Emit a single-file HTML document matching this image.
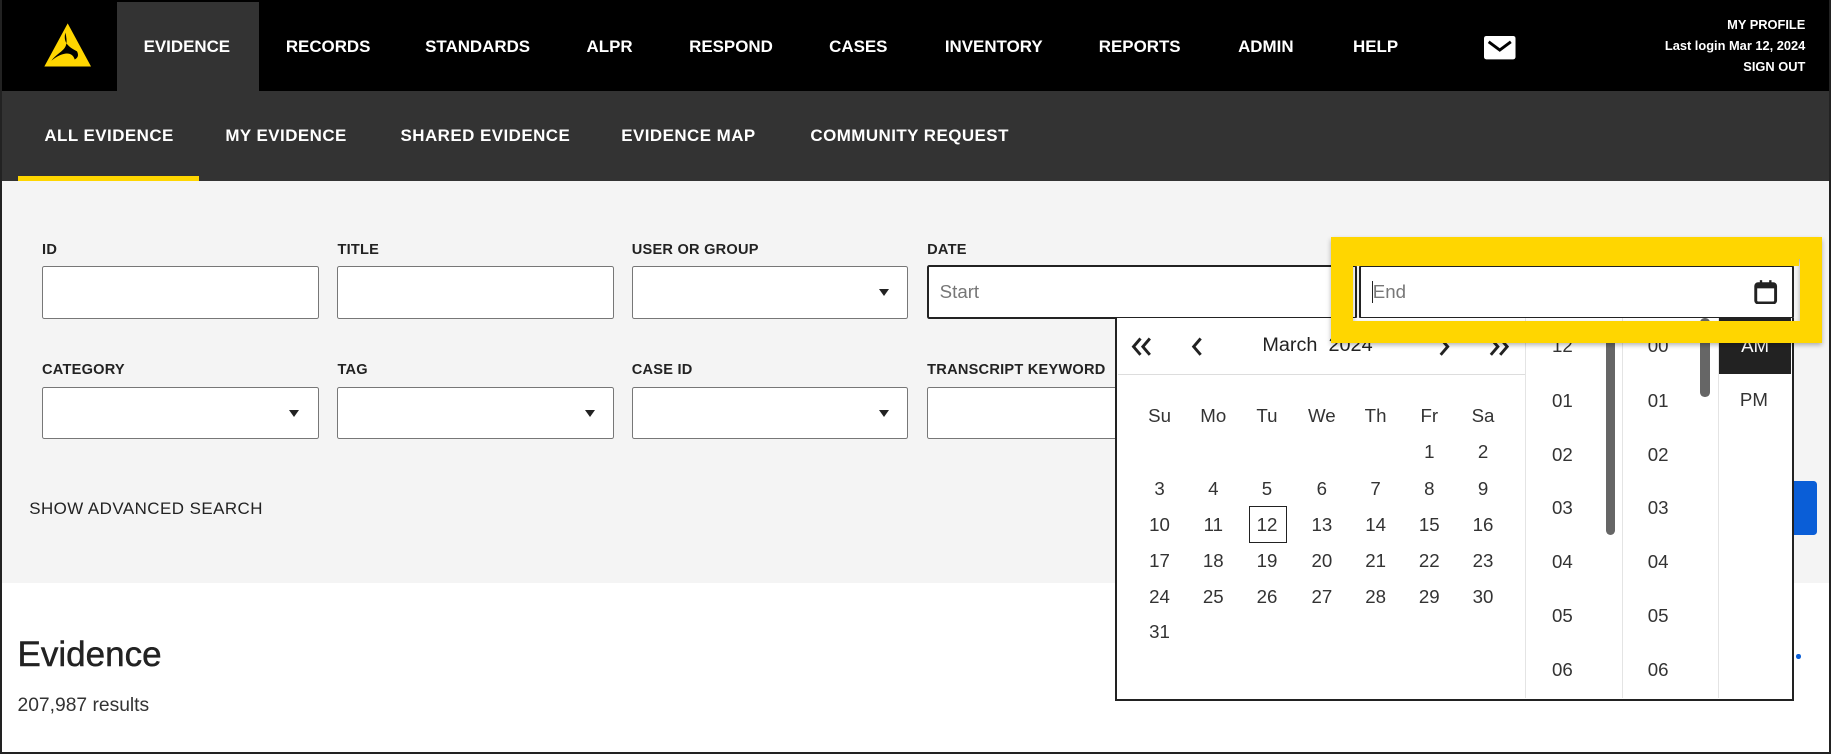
<!DOCTYPE html>
<html><head><meta charset="utf-8"><style>
*{margin:0;padding:0;box-sizing:border-box}
html,body{width:1831px;height:754px;overflow:hidden;background:#fff}
#w{zoom:1.16773;width:1568px;height:646px;position:relative;font-family:"Liberation Sans",sans-serif;color:#222;overflow:hidden}
.a{position:absolute}
.top{left:0;top:0;width:1568px;height:78px;background:#000}
.nav{color:#fff;font-weight:bold;font-size:14.5px;top:32px;letter-spacing:0;transform:translateX(-50%)}
.sub{left:0;top:78px;width:1568px;height:77px;background:#333}
.sn{color:#fff;font-weight:bold;font-size:14.5px;top:108px;letter-spacing:.4px}
.gray{left:0;top:155px;width:1568px;height:344px;background:#f4f4f4}
.lbl{font-size:12.5px;font-weight:bold;color:#222;letter-spacing:.2px}
.in{background:#fff;border:1px solid #777;border-radius:2px;height:45px;width:237px}
.car{position:absolute;right:16px;top:19px;width:0;height:0;border-left:5px solid transparent;border-right:5px solid transparent;border-top:6px solid #222}
.cal{font-size:16px;color:#333;transform:translateX(-50%)}
.tm{font-size:16px;color:#333;transform:translateX(-50%)}
</style></head><body><div id="w">
<div class="a top"></div>
<div class="a" style="left:100px;top:2px;width:122px;height:76px;background:#333"></div>
<svg class="a" style="left:36px;top:18px" width="44" height="42" viewBox="0 0 44 42"><polygon points="22,2 42,39 2,39" fill="#ffd600"/><path d="M20 10 C18 18 22 22 30 26 C32 30 30 32 28 33 C26 26 18 26 8 34 C16 24 24 26 20 10Z" fill="#000"/></svg>
<div class="a nav" style="left:160px">EVIDENCE</div>
<div class="a nav" style="left:281px">RECORDS</div>
<div class="a nav" style="left:409px">STANDARDS</div>
<div class="a nav" style="left:522px">ALPR</div>
<div class="a nav" style="left:626px">RESPOND</div>
<div class="a nav" style="left:735px">CASES</div>
<div class="a nav" style="left:851px">INVENTORY</div>
<div class="a nav" style="left:976px">REPORTS</div>
<div class="a nav" style="left:1084px">ADMIN</div>
<div class="a nav" style="left:1178px">HELP</div>
<svg class="a" style="left:1271px;top:31px" width="27" height="20" viewBox="0 0 27 20"><rect width="27" height="20" rx="2" fill="#fff"/><path d="M4 5 L13.5 12 L23 5" stroke="#000" stroke-width="2.5" fill="none"/></svg>
<div class="a" style="right:22px;top:12px;text-align:right;color:#fff;font-weight:bold;font-size:11px;line-height:18px">MY PROFILE<br>Last login Mar 12, 2024<br>SIGN OUT</div>
<div class="a sub"></div>
<div class="a sn" style="left:38px">ALL EVIDENCE</div>
<div class="a sn" style="left:193px">MY EVIDENCE</div>
<div class="a sn" style="left:343px">SHARED EVIDENCE</div>
<div class="a sn" style="left:532px">EVIDENCE MAP</div>
<div class="a sn" style="left:694px">COMMUNITY REQUEST</div>
<div class="a" style="left:15px;top:151px;width:155px;height:4px;background:#ffd600"></div>
<div class="a gray"></div>
<div class="a lbl" style="left:36px;top:207px">ID</div>
<div class="a lbl" style="left:289px;top:207px">TITLE</div>
<div class="a lbl" style="left:541px;top:207px">USER OR GROUP</div>
<div class="a lbl" style="left:794px;top:207px">DATE</div>
<div class="a in" style="left:36px;top:228px"></div>
<div class="a in" style="left:289px;top:228px"></div>
<div class="a in" style="left:541px;top:228px"><div class="car"></div></div>
<div class="a" style="left:794px;top:227px;width:368px;height:46px;background:#fff;border:2px solid #222;border-radius:2px"><span style="position:absolute;left:9px;top:12px;font-size:16px;color:#777">Start</span><div style="position:absolute;right:4px;top:11px;width:12px;height:20px;border:2.5px solid #222;border-radius:2px"></div></div>
<div class="a" style="left:1164px;top:227px;width:372px;height:46px;background:#fff;border:2px solid #222;border-radius:2px"><span style="position:absolute;left:9px;top:12px;font-size:16px;color:#777;border-left:1.5px solid #222">End</span><svg style="position:absolute;right:12px;top:10px" width="20" height="22" viewBox="0 0 20 22"><rect x="1.5" y="4" width="17" height="16.5" rx="2" fill="none" stroke="#222" stroke-width="2.5"/><rect x="1.5" y="4" width="17" height="4" fill="#222"/><rect x="5" y="1" width="2" height="5" fill="#222"/><rect x="13" y="1" width="2" height="5" fill="#222"/></svg></div>
<div class="a lbl" style="left:36px;top:310px">CATEGORY</div>
<div class="a lbl" style="left:289px;top:310px">TAG</div>
<div class="a lbl" style="left:541px;top:310px">CASE ID</div>
<div class="a lbl" style="left:794px;top:310px">TRANSCRIPT KEYWORD</div>
<div class="a in" style="left:36px;top:331px"><div class="car"></div></div>
<div class="a in" style="left:289px;top:331px"><div class="car"></div></div>
<div class="a in" style="left:541px;top:331px"><div class="car"></div></div>
<div class="a in" style="left:794px;top:331px;width:200px"></div>
<div class="a" style="left:25px;top:427px;font-size:14.5px;letter-spacing:.4px;color:#222">SHOW ADVANCED SEARCH</div>
<div class="a" style="left:1500px;top:412px;width:56px;height:46px;background:#0a5ed7;border-radius:3px"></div>
<div class="a" style="left:15px;top:544px;font-size:30px;color:#222;-webkit-text-stroke:.4px #222">Evidence</div>
<div class="a" style="left:15px;top:595px;font-size:16.5px;color:#333">207,987 results</div>
<div class="a" style="left:1538px;top:560px;width:4px;height:4px;border-radius:2px;background:#0a5ed7"></div>
<!-- popup -->
<div class="a" style="left:955px;top:272px;width:581px;height:328px;background:#fff;border:2px solid #222;border-top:none"></div>
<div class="a" style="left:957px;top:320px;width:349px;height:1px;background:#ddd"></div>
<div class="a" style="left:1306px;top:272px;width:1px;height:326px;background:#e4e4e4"></div>
<div class="a" style="left:1389px;top:272px;width:1px;height:326px;background:#e4e4e4"></div>
<div class="a" style="left:1471px;top:272px;width:1px;height:326px;background:#e4e4e4"></div>
<div class="a" style="left:1472px;top:272px;width:62px;height:48px;background:#222"></div>
<div class="a" style="left:1503px;top:287px;color:#fff;font-size:16px;transform:translateX(-50%)">AM</div>
<div class="a tm" style="left:1502px;top:333px">PM</div>
<div class="a" style="left:1375px;top:280px;width:8px;height:178px;border-radius:4px;background:#666"></div>
<div class="a" style="left:1456px;top:272px;width:8px;height:68px;border-radius:4px;background:#666"></div>
<div class="a tm" style="left:1338px;top:287px">12</div>
<div class="a tm" style="left:1420px;top:287px">00</div>
<svg class="a" style="left:968px;top:287px" width="22" height="20" viewBox="0 0 22 20"><path d="M9 3 L3 10 L9 17 M17 3 L11 10 L17 17" stroke="#222" stroke-width="2.5" fill="none"/></svg>
<svg class="a" style="left:1018px;top:287px" width="14" height="20" viewBox="0 0 14 20"><path d="M10 3 L4 10 L10 17" stroke="#222" stroke-width="2.5" fill="none"/></svg>
<div class="a" style="left:1081px;top:286px;font-size:17px;color:#222">March&nbsp; 2024</div>
<svg class="a" style="left:1230px;top:287px" width="14" height="20" viewBox="0 0 14 20"><path d="M4 3 L10 10 L4 17" stroke="#222" stroke-width="2.5" fill="none"/></svg>
<svg class="a" style="left:1272px;top:287px" width="22" height="20" viewBox="0 0 22 20"><path d="M5 3 L11 10 L5 17 M13 3 L19 10 L13 17" stroke="#222" stroke-width="2.5" fill="none"/></svg>
<div class="a" style="left:1070px;top:433px;width:32px;height:32px;border:1px solid #222"></div>
<!-- yellow highlight -->
<div class="a" style="left:1140px;top:203px;width:420px;height:91px;border:19px solid #ffd600;box-shadow:0 2px 4px rgba(0,0,0,.3), inset 0 2px 4px rgba(0,0,0,.3)"></div>
<div class="a" style="left:1158px;top:276px;width:383px;height:18px;background:#ffd600"></div>
<div class="a" style="left:1158px;top:222px;width:383px;height:6px;background:#ffd600"></div>
<!--days-->
<div class="a cal" style="left:993px;top:347px">Su</div><div class="a cal" style="left:1039px;top:347px">Mo</div><div class="a cal" style="left:1085px;top:347px">Tu</div><div class="a cal" style="left:1132px;top:347px">We</div><div class="a cal" style="left:1178px;top:347px">Th</div><div class="a cal" style="left:1224px;top:347px">Fr</div><div class="a cal" style="left:1270px;top:347px">Sa</div>
<div class="a cal" style="left:1224px;top:378px">1</div><div class="a cal" style="left:1270px;top:378px">2</div>
<div class="a cal" style="left:993px;top:409px">3</div><div class="a cal" style="left:1039px;top:409px">4</div><div class="a cal" style="left:1085px;top:409px">5</div><div class="a cal" style="left:1132px;top:409px">6</div><div class="a cal" style="left:1178px;top:409px">7</div><div class="a cal" style="left:1224px;top:409px">8</div><div class="a cal" style="left:1270px;top:409px">9</div>
<div class="a cal" style="left:993px;top:440px">10</div><div class="a cal" style="left:1039px;top:440px">11</div><div class="a cal" style="left:1085px;top:440px">12</div><div class="a cal" style="left:1132px;top:440px">13</div><div class="a cal" style="left:1178px;top:440px">14</div><div class="a cal" style="left:1224px;top:440px">15</div><div class="a cal" style="left:1270px;top:440px">16</div>
<div class="a cal" style="left:993px;top:471px">17</div><div class="a cal" style="left:1039px;top:471px">18</div><div class="a cal" style="left:1085px;top:471px">19</div><div class="a cal" style="left:1132px;top:471px">20</div><div class="a cal" style="left:1178px;top:471px">21</div><div class="a cal" style="left:1224px;top:471px">22</div><div class="a cal" style="left:1270px;top:471px">23</div>
<div class="a cal" style="left:993px;top:502px">24</div><div class="a cal" style="left:1039px;top:502px">25</div><div class="a cal" style="left:1085px;top:502px">26</div><div class="a cal" style="left:1132px;top:502px">27</div><div class="a cal" style="left:1178px;top:502px">28</div><div class="a cal" style="left:1224px;top:502px">29</div><div class="a cal" style="left:1270px;top:502px">30</div>
<div class="a cal" style="left:993px;top:532px">31</div>
<div class="a tm" style="left:1338px;top:334px">01</div><div class="a tm" style="left:1420px;top:334px">01</div>
<div class="a tm" style="left:1338px;top:380px">02</div><div class="a tm" style="left:1420px;top:380px">02</div>
<div class="a tm" style="left:1338px;top:426px">03</div><div class="a tm" style="left:1420px;top:426px">03</div>
<div class="a tm" style="left:1338px;top:472px">04</div><div class="a tm" style="left:1420px;top:472px">04</div>
<div class="a tm" style="left:1338px;top:518px">05</div><div class="a tm" style="left:1420px;top:518px">05</div>
<div class="a tm" style="left:1338px;top:564px">06</div><div class="a tm" style="left:1420px;top:564px">06</div>
<div class="a" style="left:0;top:0;width:1568px;height:646px;border:2px solid #222;border-top:none;pointer-events:none"></div>
</div></body></html>
